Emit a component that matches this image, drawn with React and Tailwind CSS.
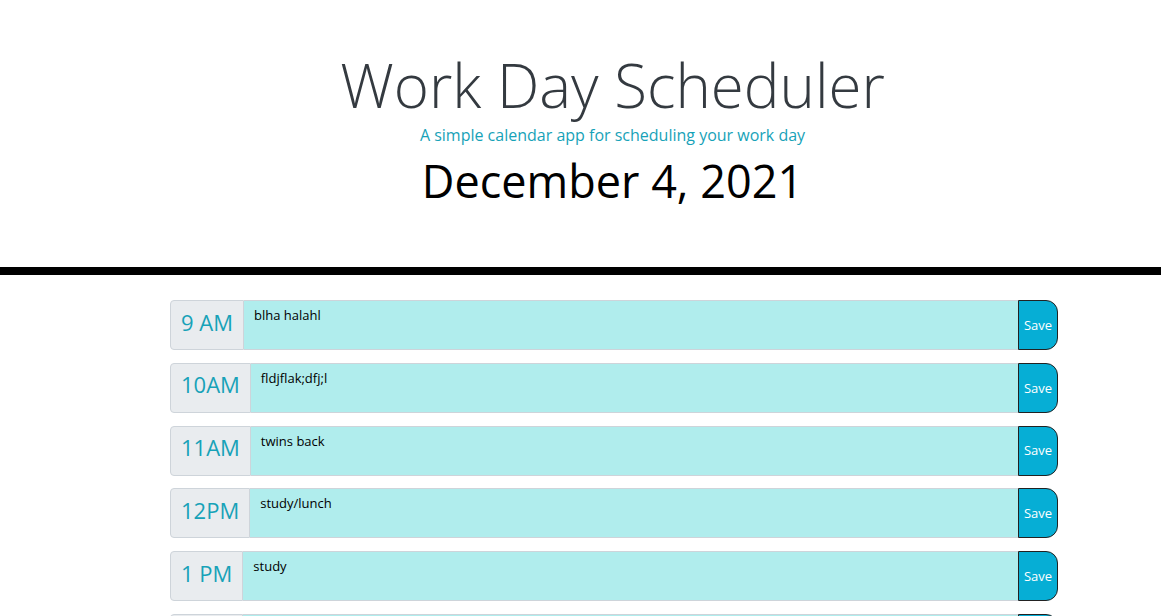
import React from "react";

const rows = [
  { hour: "9 AM", text: "blha halahl" },
  { hour: "10AM", text: "fldjflak;dfj;l" },
  { hour: "11AM", text: "twins back" },
  { hour: "12PM", text: "study/lunch" },
  { hour: "1 PM", text: "study" },
  { hour: "2 PM", text: "" },
];

export default function App() {
  return (
    <div className="min-h-screen bg-white" style={{ fontFamily: '"Open Sans", sans-serif' }}>
      <header className="border-b-[8px] border-black h-[275px] flex flex-col items-center pl-[64px] pt-[49px]">
        <h1 className="text-[60px] font-light leading-[72px] text-[#343a40] m-0">Work Day Scheduler</h1>
        <p className="text-[16px] leading-[24px] text-[#17a2b8] mt-[2px]">A simple calendar app for scheduling your work day</p>
        <p className="text-[45px] leading-[54px] text-black mt-[7px]">December 4, 2021</p>
      </header>
      <div className="ml-[170px] w-[888px] pt-[25px] flex flex-col gap-[12.75px]">
        {rows.map((r, i) => (
          <div key={i} className="flex h-[50px]">
            <div className="flex items-center px-[10px] pb-[7px] bg-[#e9ecef] border border-[#ced4da] rounded-l-[4px] text-[22px] text-[#17a2b8] leading-none">
              {r.hour}
            </div>
            <div className="flex-1 bg-[#b0eded] border-y border-[#ced4da] pl-[10px] pt-[5px] text-[13px] text-black leading-[18px]">
              {r.text}
            </div>
            <div className="w-[40px] bg-[#06aed5] border border-[#222] rounded-r-[12px] flex items-center justify-center text-white text-[13px] pt-[1px]">
              Save
            </div>
          </div>
        ))}
      </div>
    </div>
  );
}
